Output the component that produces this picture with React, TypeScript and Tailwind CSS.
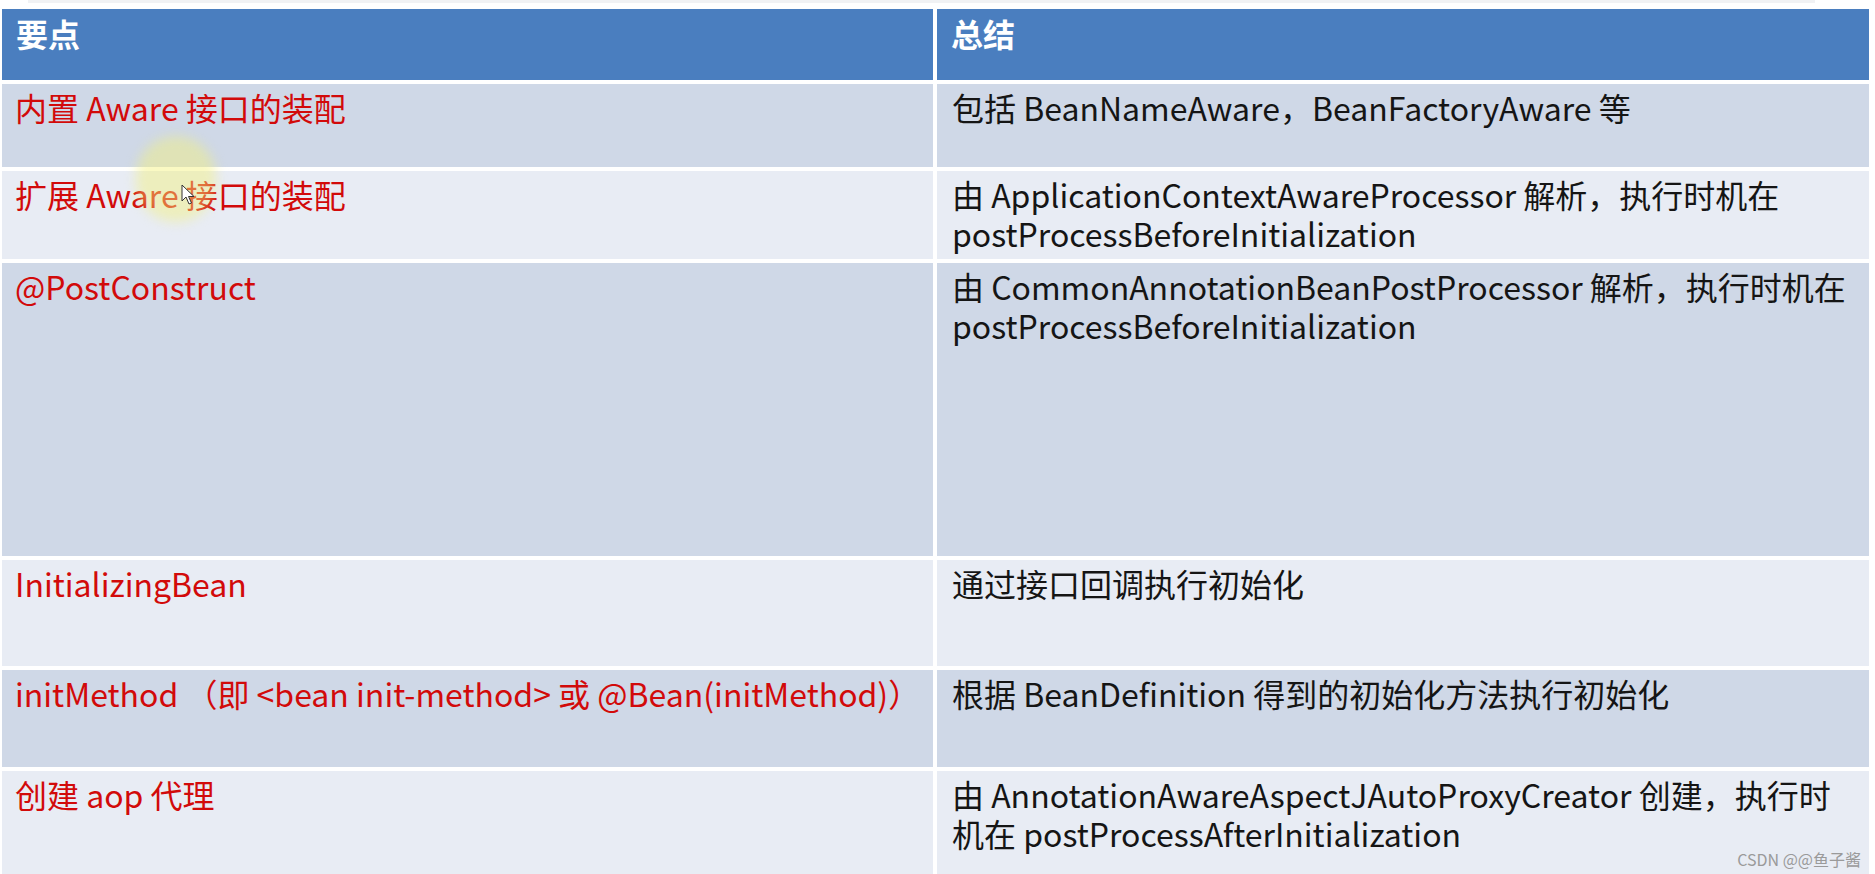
import React from 'react';

interface Row {
  point: React.ReactNode;
  summary: React.ReactNode;
  height: string;
  dark: boolean;
}

// 表格数据（行高按截图量出）
const rows: Row[] = [
  {
    point: '内置 Aware 接口的装配',
    summary: '包括 BeanNameAware，BeanFactoryAware 等',
    height: 'h-[83px]',
    dark: true,
  },
  {
    point: '扩展 Aware 接口的装配',
    summary: (
      <>
        由 ApplicationContextAwareProcessor 解析，执行时机在
        <br />
        postProcessBeforeInitialization
      </>
    ),
    height: 'h-[88px]',
    dark: false,
  },
  {
    point: '@PostConstruct',
    summary: (
      <>
        由 CommonAnnotationBeanPostProcessor 解析，执行时机在
        <br />
        postProcessBeforeInitialization
      </>
    ),
    height: 'h-[293px]',
    dark: true,
  },
  {
    point: 'InitializingBean',
    summary: '通过接口回调执行初始化',
    height: 'h-[106px]',
    dark: false,
  },
  {
    point: 'initMethod （即 <bean init-method> 或 @Bean(initMethod)）',
    summary: '根据 BeanDefinition 得到的初始化方法执行初始化',
    height: 'h-[97px]',
    dark: true,
  },
  {
    point: '创建 aop 代理',
    summary: (
      <>
        由 AnnotationAwareAspectJAutoProxyCreator 创建，执行时
        <br />
        机在 postProcessAfterInitialization
      </>
    ),
    height: 'h-[103px]',
    dark: false,
  },
];

const App: React.FC = () => {
  return (
    <div
      className="relative w-[1875px] h-[874px] overflow-hidden bg-white"
      style={{ fontFamily: '"Noto Sans CJK SC", "Noto Sans", sans-serif' }}
    >
      {/* 顶部浅色条 */}
      <div className="h-[9px] pl-[28px] pr-[60px]">
        <div className="h-[3px] bg-[#f1f2f4]" />
      </div>

      <div className="pl-[2px] pr-[6px] flex flex-col gap-[4px]">
        {/* Header */}
        <div className="grid grid-cols-[931px_932px] gap-x-[4px] h-[71px]">
          <div className="bg-[#4a7ebf] px-[14px] pt-[5px] text-[32px] leading-[39px] font-bold text-white">
            要点
          </div>
          <div className="bg-[#4a7ebf] px-[14px] pt-[5px] text-[32px] leading-[39px] font-bold text-white">
            总结
          </div>
        </div>

        {rows.map((row, i) => (
          <div key={i} className={`grid grid-cols-[931px_932px] gap-x-[4px] ${row.height}`}>
            <div
              className={`${row.dark ? 'bg-[#cfd8e7]' : 'bg-[#e8ecf4]'} px-[13px] pt-[4px] text-[32px] leading-[39px] text-[#d20a0a] whitespace-nowrap`}
            >
              {row.point}
            </div>
            <div
              className={`${row.dark ? 'bg-[#cfd8e7]' : 'bg-[#e8ecf4]'} px-[15px] pt-[4px] text-[32px] leading-[39px] text-[#151515] whitespace-nowrap`}
            >
              {row.summary}
            </div>
          </div>
        ))}
      </div>

      {/* 鼠标高亮和指针 */}
      <div className="absolute left-[136px] top-[136px] w-[80px] h-[86px] rounded-full bg-[#f4f27a]/45 blur-[6px]" />
      <svg
        className="absolute left-[181px] top-[184px]"
        width="14"
        height="22"
        viewBox="0 0 14 22"
      >
        <path d="M1 1 L1 17 L5 13 L8 20 L10.5 19 L7.5 12.5 L13 12.5 Z" fill="#ffffff" stroke="#333" strokeWidth="1" />
      </svg>

      {/* 水印 */}
      <div className="absolute right-[14px] bottom-[6px] text-[16px] leading-[18px] text-[#9a9a9a]">
        CSDN @@鱼子酱
      </div>
    </div>
  );
};

export default App;
